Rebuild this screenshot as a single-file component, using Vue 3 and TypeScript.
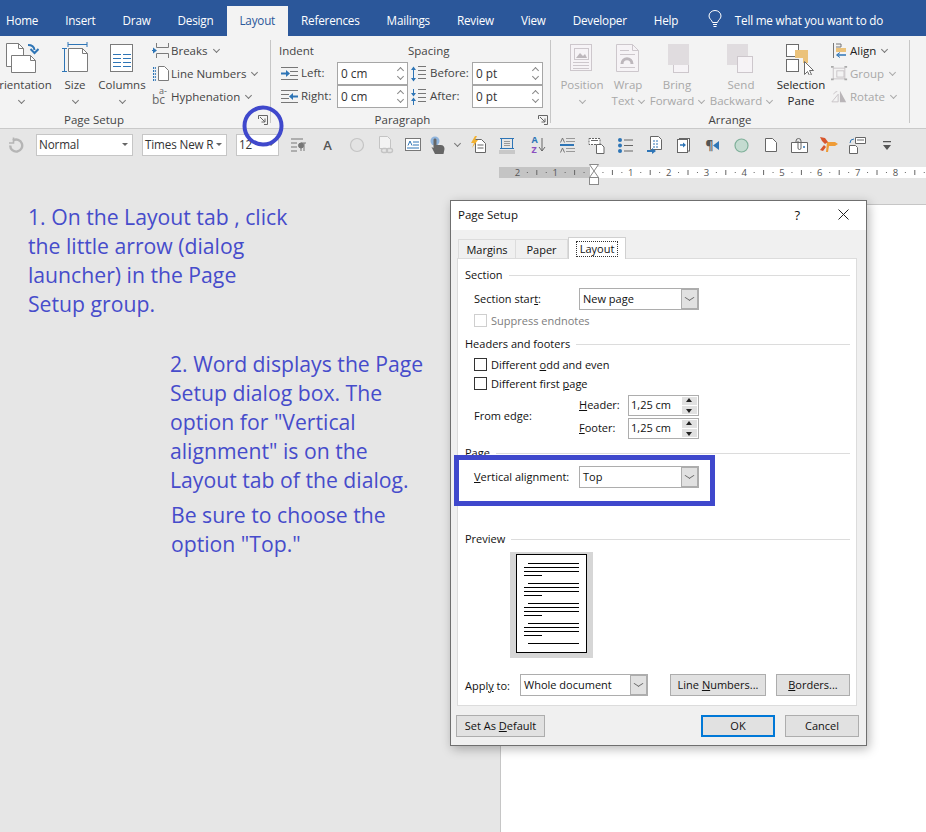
<script setup lang="ts">
const tabs: string[] = ['Home', 'Insert', 'Draw', 'Design', 'Layout', 'References', 'Mailings', 'Review', 'View', 'Developer', 'Help']
const cm = 37.8
const zero = 94
const rulerNums = [
  { t: '2', x: zero - 2 * cm }, { t: '1', x: zero - cm },
  ...[1, 2, 3, 4, 5, 6, 7, 8].map((n) => ({ t: String(n), x: zero + n * cm }))
]
const ticks: { x: number; big: boolean }[] = []
for (let i = -2; i < 9; i++) {
  ticks.push({ x: zero + (i + 0.25) * cm, big: false }, { x: zero + (i + 0.5) * cm, big: true }, { x: zero + (i + 0.75) * cm, big: false })
}
const previewLines: { x: number; w: number; y: number }[] = []
for (let g = 0; g < 4; g++) {
  const y0 = 8 + g * 20
  previewLines.push({ x: 11, w: 51, y: y0 }, { x: 7, w: 55, y: y0 + 4 }, { x: 7, w: 55, y: y0 + 8 }, { x: 7, w: 18, y: y0 + 12 })
}
previewLines.push({ x: 11, w: 51, y: 88 })
</script>

<template>
  <div class="app">
    <div class="tabbar">
      <span v-for="t in tabs" :key="t" class="tab" :class="{ active: t === 'Layout' }">{{ t }}</span>
      <svg class="bulb" width="14" height="18" viewBox="0 0 14 18" fill="none" stroke="#fff" stroke-width="1"><path d="M4.500 12.500C4 10 1 9 1 6a6 5.500 0 0 1 12 0c0 3-3 4-3.500 6.500z" /><path d="M5 14.500h4M5.500 16.500h3" /></svg>
      <span class="tell">Tell me what you want to do</span>
    </div>

    <div class="ribbon">
      <!-- Page Setup -->
      <section class="group g-page">
        <div class="g-body">
          <div class="big w-ori">
            <svg width="36" height="34" viewBox="0 0 36 34" fill="#fff" stroke="#7b7b7b" stroke-width="1"><path d="M3.500 2.500h12l5 5v18h-17z" /><path d="M8.500 14.500h19l5 5v12h-24z" /><path d="M27.500 14.500v5h5M15.500 2.500v5h5" fill="none" /><path d="M25 4c4 0 6 1 6.500 5" fill="none" stroke="#2e75b6" stroke-width="2" /><path d="M27.500 8l4 4 4-4" fill="none" stroke="#2e75b6" stroke-width="2" /></svg>
            <span>Orientation</span><i class="chev" />
          </div>
          <div class="big w-size">
            <svg width="26" height="34" viewBox="0 0 26 34" fill="#fff" stroke="#7b7b7b"><path d="M6.500 7.500h14l5 5v18h-19z" /><path d="M20.500 7.500v5h5" fill="none" /><path d="M6 3.500h19M6 1v5M25 1v5M2.500 8v23M0 7.500h5M0 30.500h5" fill="none" stroke="#2e75b6" /></svg>
            <span>Size</span><i class="chev" />
          </div>
          <div class="big w-col">
            <svg width="24" height="34" viewBox="0 0 24 34" fill="#fff" stroke="#7b7b7b"><rect x=".5" y="3.500" width="22" height="27" /><path d="M3 13.500h8M13 13.500h8M3 17.500h8M13 17.500h8M3 21.500h8M13 21.500h8M3 25.500h8M13 25.500h8" stroke="#2e75b6" /></svg>
            <span>Columns</span><i class="chev" />
          </div>
          <div class="small-col">
            <div class="small">
              <svg width="17" height="17" viewBox="0 0 17 17" fill="none" stroke="#7b7b7b"><path d="M4.500 1v4.500h12V1M4.500 16v-4.500h12V16" /><path d="M0 8.500h1" stroke="#2e75b6" /><path d="M1 5.500l4 3-4 3z" fill="#2e75b6" stroke="none" /></svg>
              <span>Breaks</span><i class="chev" />
            </div>
            <div class="small">
              <svg width="17" height="17" viewBox="0 0 17 17" fill="#fff" stroke="#7b7b7b"><path d="M6.500 1.500h6l4 4v10h-10z" /><path d="M1 3h3M1 6h3M1 9h3M1 12h3M1 15h3" stroke="#2e75b6" stroke-width="2" stroke-dasharray="1 .8" /></svg>
              <span>Line Numbers</span><i class="chev" />
            </div>
            <div class="small">
              <svg width="17" height="19" viewBox="0 0 17 19"><text x="7" y="7" class="hy" fill="#666">a-</text><text x="0" y="17" class="hy2" fill="#666">bc</text></svg>
              <span>Hyphenation</span><i class="chev" />
            </div>
          </div>
        </div>
        <div class="g-label l-page">Page Setup<svg class="launch" width="10" height="10" viewBox="0 0 10 10" fill="none" stroke="#666"><path d="M.5 4V.5h9V9.500H6" /><path d="M2 2l5 5M7 3.500V7H3.500" /></svg></div>
      </section>
      <div class="sep" />

      <!-- Paragraph -->
      <section class="group g-para">
        <div class="g-body para-body">
          <div class="para-col indent">
            <div class="para-head">Indent</div>
            <div class="para-row">
              <svg width="17" height="14" viewBox="0 0 17 14" fill="none" stroke="#777"><path d="M0 .500h17M9 4.500h8M9 8.500h8M0 12.500h17" /><path d="M0 6.500h5" stroke="#2e75b6" stroke-width="2" /><path d="M5 3l4 3.500L5 10z" fill="#2e75b6" stroke="none" /></svg>
              <span class="para-lab">Left:</span>
              <span class="spin">0 cm<i class="sp"><i class="up" /><i class="dn" /></i></span>
            </div>
            <div class="para-row">
              <svg width="17" height="14" viewBox="0 0 17 14" fill="none" stroke="#777"><path d="M0 .500h17M0 4.500h8M0 8.500h8M0 12.500h17" /><path d="M12 6.500h5" stroke="#2e75b6" stroke-width="2" /><path d="M12 3L8 6.500l4 3.500z" fill="#2e75b6" stroke="none" /></svg>
              <span class="para-lab">Right:</span>
              <span class="spin">0 cm<i class="sp"><i class="up" /><i class="dn" /></i></span>
            </div>
          </div>
          <div class="para-col spacing">
            <div class="para-head">Spacing</div>
            <div class="para-row">
              <svg width="17" height="16" viewBox="0 0 17 16" fill="none" stroke="#777"><path d="M8 .500h8M8 4.500h8M8 8.500h8M8 12.500h8" /><path d="M3.500 1v14" stroke="#2e75b6" /><path d="M1 4l2.500-3.500L6 4zM1 12l2.500 3.500L6 12z" fill="#2e75b6" stroke="none" /></svg>
              <span class="para-lab sl">Before:</span>
              <span class="spin sw">0 pt<i class="sp"><i class="up" /><i class="dn" /></i></span>
            </div>
            <div class="para-row">
              <svg width="17" height="16" viewBox="0 0 17 16" fill="none" stroke="#777"><path d="M8 .500h8M8 4.500h8M8 8.500h8M8 12.500h8" /><path d="M3.500 0v6M3.500 10v6" stroke="#2e75b6" /><path d="M1 4l2.500 3.500L6 4zM1 12l2.500-3.500L6 12z" fill="#2e75b6" stroke="none" /></svg>
              <span class="para-lab sl">After:</span>
              <span class="spin sw">0 pt<i class="sp"><i class="up" /><i class="dn" /></i></span>
            </div>
          </div>
        </div>
        <div class="g-label l-para">Paragraph<svg class="launch" width="10" height="10" viewBox="0 0 10 10" fill="none" stroke="#666"><path d="M.5 4V.5h9V9.500H6" /><path d="M2 2l5 5M7 3.500V7H3.500" /></svg></div>
      </section>
      <div class="sep" />

      <!-- Arrange -->
      <section class="group g-arr">
        <div class="g-body">
          <div class="big off w-pos">
            <svg width="24" height="34" viewBox="0 0 24 34" fill="#f6f3f6" stroke="#cdc7cc"><rect x=".5" y="3.500" width="21" height="26" /><rect x="4.500" y="7.500" width="14" height="11" /><path d="M6 17l4-5 3 3 2-2 2 4z" fill="#bdb7bc" stroke="none" /><path d="M3 21.500h16M3 24.500h16M3 27.500h16" fill="none" /></svg>
            <span>Position</span><i class="chev" />
          </div>
          <div class="big off w-wrap">
            <svg width="24" height="34" viewBox="0 0 24 34" fill="#f6f3f6" stroke="#cdc7cc"><path d="M.5 3.500h16l6 6v21H.5z" /><path d="M16.500 3.500v6h6M4 9.500h9M4 13.500h15M4 26.500h15" fill="none" /><path d="M6 23c0-7 10-7 10 0" fill="none" stroke="#bdb7bc" stroke-width="3" /></svg>
            <span>Wrap<br />Text <i class="chev inl" /></span>
          </div>
          <div class="big off w-bring">
            <svg width="28" height="34" viewBox="0 0 28 34" fill="#f6f3f6" stroke="#cdc7cc"><rect x="10.500" y="15.500" width="15" height="16" /><rect x="5" y="3" width="21" height="21" fill="#e0dcdf" stroke="none" /></svg>
            <span>Bring<br />Forward <i class="chev inl" /></span>
          </div>
          <div class="big off w-send">
            <svg width="28" height="34" viewBox="0 0 28 34" fill="#f6f3f6" stroke="#cdc7cc"><rect x="0" y="3" width="21" height="21" fill="#e0dcdf" stroke="none" /><rect x="10.500" y="15.500" width="15" height="16" /></svg>
            <span>Send<br />Backward <i class="chev inl" /></span>
          </div>
          <div class="big w-sel">
            <svg width="30" height="34" viewBox="0 0 30 34" fill="#fff" stroke="#6b6b6b"><rect x=".5" y="3.500" width="12" height="12" /><rect x=".5" y="18.500" width="12" height="12" /><path d="M9 9h13v13h-5v-5H9z" fill="#ebc27a" stroke="none" /><path d="M18.500 20.500v13l3-3 2 4 2-1-2-4h4z" /></svg>
            <span>Selection<br />Pane</span>
          </div>
          <div class="small-col arr-col">
            <div class="small dark">
              <svg width="17" height="17" viewBox="-2 0 17 17" fill="none" stroke="#777"><path d="M.5 1v15" /><path d="M3 2h5v3H3" /><rect x="3" y="6" width="10" height="4" fill="#ebc27a" stroke="none" /><path d="M4 13h9" stroke="#2e75b6" stroke-width="1.500" /><path d="M7 10.500L3.500 13 7 15.500" stroke="#2e75b6" /></svg>
              <span>Align</span><i class="chev" />
            </div>
            <div class="small off">
              <svg width="17" height="17" viewBox="0 0 19 17" fill="none" stroke="#c6c2c5"><rect x="2.500" y="2.500" width="13" height="12" /><rect x="6.500" y="5.500" width="8" height="7" /><path d="M0 1h3M15 1h3M0 15h3M15 15h3" stroke="#aaa" stroke-width="2" /></svg>
              <span>Group</span><i class="chev" />
            </div>
            <div class="small off">
              <svg width="17" height="17" viewBox="0 0 19 17" fill="none" stroke="#c6c2c5"><path d="M1 14.500L8 6v8.500z" /><path d="M10 2l7 13h-7z" fill="#b9b5b8" stroke="none" /><path d="M3 6c1-2 2-3 4-3" /></svg>
              <span>Rotate</span><i class="chev" />
            </div>
          </div>
        </div>
        <div class="g-label">Arrange</div>
      </section>
      <div class="sep" />
    </div>

    <div class="qat">
      <svg class="undo" width="16" height="16" viewBox="0 0 16 16" fill="none" stroke="#b5b5b5" stroke-width="2.400"><path d="M5 3.500a6 6 0 1 1-2.800 5" /><path d="M5.500 .5v5.500H1" stroke-width="1.600" /></svg>
      <span class="combo c-style">Normal<i class="tri" /></span>
      <span class="combo c-font">Times New R<i class="tri" /></span>
      <span class="combo c-size">12<i class="tri" /></span>
      <div class="qi-row">
        <span class="qi"><svg width="17" height="14" viewBox="0 0 17 14" fill="none" stroke="#777"><path d="M1 1h12M1 5h6M1 9h6M1 13h6" /><path d="M11 13V5h5M14 13V5" /><circle cx="11" cy="7.500" r="2.500" fill="#777" /></svg></span>
        <span class="qi glyph">A</span>
        <span class="qi"><svg width="16" height="16" viewBox="0 0 16 16"><circle cx="8" cy="8" r="6.500" fill="#e3e3e3" stroke="#c4c4c4" stroke-width="1.200" /></svg></span>
        <span class="qi"><svg width="16" height="18" viewBox="0 0 16 18" fill="#f3f3f3" stroke="#c4c4c4"><path d="M1.500 .5h8l3 3v9h-11z" /><rect x="3.500" y="12.500" width="6" height="4" rx="2" fill="none" stroke-width="1.400" /><rect x="8.500" y="12.500" width="6" height="4" rx="2" fill="none" stroke-width="1.400" /></svg></span>
        <span class="qi q-n"><svg width="16" height="14" viewBox="0 0 16 14" fill="#fff" stroke="#777"><rect x=".5" y=".5" width="15" height="12" /><path d="M8 4h6M8 7h6M2 10h12" stroke="#2e75b6" /><path d="M3 7.500L5 3l2 4.500" stroke="#2e75b6" fill="none" /></svg></span>
        <span class="qi q-h"><svg width="16" height="19" viewBox="0 0 16 19"><circle cx="5" cy="5" r="4.500" fill="#8fb4dc" /><path d="M3.500 4c0-2 3-2 3 0v5h4c3 0 4 2 4 4l-1 5H5L1.500 11l2 1z" fill="#666" /></svg></span>
        <span class="qi q-c"><i class="chev" /></span>
        <span class="qi"><svg width="15" height="18" viewBox="0 0 15 18" fill="#fff" stroke="#666"><path d="M4.500 3.500h6l4 4v9h-10z" /><path d="M6.500 9h6M6.500 12h6" fill="none" /><path d="M4 0L0 7h3l-2 5 6-8H4l2-4z" fill="#f2b233" stroke="none" /></svg></span>
        <span class="qi"><svg width="17" height="17" viewBox="0 0 17 17" fill="none" stroke="#888"><rect x="2.500" y="1.500" width="11" height="10" stroke="#2e75b6" /><path d="M5 4.500h6M5 6.500h6M5 8.500h6" stroke="#999" /><path d="M1 1.500h3M12 1.500h3M1 11.500h3M12 11.500h3" stroke="#2e75b6" /><path d="M0 14h16M0 16h16" stroke="#aaa" /></svg></span>
        <span class="qi q-az"><span class="az"><b class="a1">A</b><b class="a2">Z</b></span><svg width="8" height="16" viewBox="0 0 8 16" fill="none" stroke="#666"><path d="M4 1v13M1 10l3 4 3-4" /></svg></span>
        <span class="qi"><svg width="16" height="17" viewBox="0 0 16 17" fill="none" stroke="#999"><path d="M0 8h14" stroke="#2e75b6" stroke-width="2" /><path d="M6 1.500h9M6 4.500h9M6 11.500h9M6 14.500h9" /><path d="M.5 5.500L2.500 1l2 4.500M.5 15.500l2-4.500 2 4.500" stroke="#777" /></svg></span>
        <span class="qi"><svg width="17" height="17" viewBox="0 0 17 17" fill="#fff" stroke="#666"><path d="M1 1.500h11v6H1z" stroke-dasharray="2 1" /><path d="M8.500 7.500h5l2.500 2.500v6.500H8.500z" /><path d="M3 3.500h7" /></svg></span>
        <span class="qi"><svg width="15" height="15" viewBox="0 0 15 15" fill="#2e75b6"><circle cx="2" cy="2" r="2" /><circle cx="2" cy="7.500" r="2" /><circle cx="2" cy="13" r="2" /><path d="M6 2h9M6 7.500h9M6 13h9" stroke="#666" /></svg></span>
        <span class="qi"><svg width="15" height="18" viewBox="0 0 15 18" fill="#fff" stroke="#666"><path d="M3.500 .5h8l3 3v10h-11z" /><path d="M6 5h6M6 8h6M6 11h6" stroke="#2e75b6" stroke-dasharray="2 1" /><path d="M0 15h6" stroke="#2e75b6" stroke-width="2" /><path d="M5 12l4 3-4 3z" fill="#2e75b6" stroke="none" /></svg></span>
        <span class="qi"><svg width="13" height="15" viewBox="0 0 13 15" fill="#fff" stroke="#666"><rect x="2.500" y=".5" width="10" height="12.500" /><rect x=".5" y="1.500" width="10" height="13" /><path d="M3 7h5" stroke="#2e75b6" stroke-width="1.500" /><path d="M6 4.500l3 2.500-3 2.500z" fill="#2e75b6" stroke="none" /></svg></span>
        <span class="qi pil">¶<svg width="6" height="9" viewBox="0 0 6 9" fill="#2e75b6"><path d="M6 0v9L0 4.500z" /></svg></span>
        <span class="qi"><svg width="15" height="15" viewBox="0 0 15 15"><circle cx="7.500" cy="7.500" r="6.500" fill="#c4dbd0" stroke="#7fb09a" stroke-width="1.200" /></svg></span>
        <span class="qi"><svg width="12" height="14" viewBox="0 0 12 14" fill="#fff" stroke="#666"><path d="M.5 .5h7l4 4v9H.5z" /></svg></span>
        <span class="qi"><svg width="17" height="15" viewBox="0 0 17 15" fill="#fff" stroke="#666"><path d="M.5 4.500h16v10H.5z" /><path d="M5 5V3a2.500 2.500 0 0 1 5 0v7a1.500 1.500 0 0 1-3 0V3" fill="none" /><circle cx="13" cy="9" r="1" fill="#2e75b6" stroke="none" /></svg></span>
        <span class="qi"><svg width="18" height="16" viewBox="0 0 18 16"><path d="M7 5h8l3 2-3 2H9l-1 6H6z" fill="#ef9c37" /><path d="M0 0l5 1 3 4-3 2-3-3zM0 13l4-5 2 2-3 4z" fill="#d8562c" /></svg></span>
        <span class="qi"><svg width="17" height="17" viewBox="0 0 17 17" fill="#fff" stroke="#666"><path d="M6.500 .5h10v6h-10z" /><path d="M8 3h7" /><path d="M.5 8.500h6l2 2v6h-8z" /><path d="M1 6a4 4 0 0 1 4-4" fill="none" stroke="#2e75b6" /></svg></span>
        <span class="qi"><svg width="8" height="9" viewBox="0 0 8 9" fill="#555"><path d="M0 0h8v1.200H0zM0 4h8L4 9z" /></svg></span>
      </div>
    </div>

    <div class="ruler">
      <svg width="427" height="11" viewBox="0 0 427 11">
        <rect width="91" height="11" fill="#c4c4c4" />
        <rect x="91" width="336" height="11" fill="#fff" />
        <template v-for="(k, i) in ticks" :key="i">
          <rect :x="k.x" :y="k.big ? 3 : 5" width="1" :height="k.big ? 5 : 1" fill="#666" />
        </template>
        <text v-for="n in rulerNums" :key="n.x" :x="n.x" y="9" class="rnum" text-anchor="middle">{{ n.t }}</text>
      </svg>
      <svg class="marker" width="10" height="22" viewBox="0 0 10 22" fill="#fff" stroke="#8a8a8a"><path d="M.5 .5h9L5 7z" /><path d="M5 7l4.500 6.500h-9z" /><rect x=".5" y="13.500" width="9" height="7" /></svg>
    </div>

    <div class="workspace">
      <div class="docpage" />
    </div>

    <!-- Annotations -->
    <svg class="circle" width="42" height="42" viewBox="0 0 42 42" fill="none"><circle cx="21" cy="21" r="18.500" stroke="#3f48cc" stroke-width="4" /></svg>

    <p class="note n1">1. On the Layout tab , click<br />the little arrow (dialog<br />launcher) in the Page<br />Setup group.</p>
    <div class="note n2">
      <p>2. Word displays the Page<br />Setup dialog box. The<br />option for "Vertical<br />alignment" is on the<br />Layout tab of the dialog.</p>
      <p class="sure">Be sure to choose the<br />option "Top."</p>
    </div>

    <!-- Dialog -->
    <div class="dialog">
      <div class="d-title">
        <span class="d-name">Page Setup</span>
        <span class="d-help">?</span>
        <svg class="d-x" width="11" height="11" viewBox="0 0 11 11" stroke="#222" stroke-width="1"><path d="M.5 .5l10 10M10.500 .5l-10 10" /></svg>
      </div>
      <div class="d-tabs">
        <span class="d-tab t-m">Margins</span>
        <span class="d-tab t-p">Paper</span>
        <span class="d-tab t-l"><span class="focus">Layout</span></span>
      </div>
      <div class="panel">
        <div class="legend">Section</div>
        <div class="frow r-sec"><span class="flab"><span>Section star<u>t</u>:</span></span><span class="sel s-120">New page<i class="sel-btn"><i class="v" /></i></span></div>
        <div class="check dis r-sup"><i class="box" />Suppress endnotes</div>
        <div class="legend r-hf">Headers and footers</div>
        <div class="check r-odd"><i class="box" /><span>Different <u>o</u>dd and even</span></div>
        <div class="check r-first"><i class="box" /><span>Different first <u>p</u>age</span></div>
        <div class="edge">
          <span class="flab from">From edge:</span>
          <div class="edge-fields">
            <div class="efield"><span class="elab"><u>H</u>eader:</span><span class="num">1,25 cm<i class="nsp"><i class="nup" /><i class="ndn" /></i></span></div>
            <div class="efield"><span class="elab"><u>F</u>ooter:</span><span class="num">1,25 cm<i class="nsp"><i class="nup" /><i class="ndn" /></i></span></div>
          </div>
        </div>
        <div class="legend r-page">Page</div>
        <div class="frow r-val"><span class="flab"><span><u>V</u>ertical alignment:</span></span><span class="sel s-120">Top<i class="sel-btn"><i class="v" /></i></span></div>
        <div class="legend r-prev">Preview</div>
        <div class="prev-wrap">
          <div class="prev-page">
            <i v-for="(l, i) in previewLines" :key="i" class="pl" :style="{ left: l.x + 'px', width: l.w + 'px', top: l.y + 'px' }" />
          </div>
        </div>
        <div class="apply">
          <span class="a-lab">Appl<u>y</u> to:</span>
          <span class="sel s-doc">Whole document<i class="sel-btn"><i class="v" /></i></span>
          <button class="btn b-line" type="button">Line <u>N</u>umbers...</button>
          <button class="btn b-bord" type="button"><u>B</u>orders...</button>
        </div>
      </div>
      <div class="d-foot">
        <button class="btn b-def" type="button">Set As <u>D</u>efault</button>
        <button class="btn b-ok" type="button">OK</button>
        <button class="btn b-can" type="button">Cancel</button>
      </div>
    </div>

    <div class="hl" />
  </div>
</template>

<style>
html, body { margin: 0; padding: 0; background: #e6e6e6; }
</style>

<style scoped>
.app {
  position: relative; width: 926px; height: 832px; overflow: hidden;
  display: flex; flex-direction: column;
  background: #e6e6e6; color: #444;
  font-family: "Open Sans", "Noto Sans", sans-serif; font-size: 11.5px;
}
.tabbar { height: 36px; background: #2b579a; display: flex; align-items: flex-end; flex: none; }
.tab { color: #fff; font-size: 11.7px; height: 30px; line-height: 28px; padding: 0 13.5px; letter-spacing: -.2px; }
.tab:first-child { padding-left: 6px; }
.tab.active { background: #f3f3f3; color: #2b579a; padding: 0 12.5px; }
.bulb { margin: 0 12px 8px 16px; }
.tell { color: #fff; font-size: 11.7px; height: 30px; line-height: 28px; letter-spacing: -.2px; margin-left: 1px; }

.ribbon { flex: none; height: 92px; background: #f3f3f3; border-bottom: 1px solid #c9c9c9; display: flex; overflow: hidden; }
.group { display: flex; flex-direction: column; height: 92px; flex: none; }
.g-body { display: flex; height: 76px; }
.g-label { position: relative; height: 16px; line-height: 16px; text-align: center; color: #444; }
.l-page { text-align: left; padding-left: 64px; }
.l-para { padding-right: 16px; }
.launch { position: absolute; right: 2px; top: 3px; }
.sep { flex: none; width: 1px; height: 83px; margin-top: 4px; background: #c6c6c6; }
.g-page { width: 270px; }
.g-para { width: 279px; }
.g-arr { width: 358px; }

.big { flex: none; display: flex; flex-direction: column; align-items: center; text-align: center; line-height: 16px; white-space: nowrap; padding-top: 5px; }
.big svg { display: block; flex: none; margin-bottom: 2px; }
.big.off, .small.off { color: #a8a8a8; }
.w-ori { width: 62px; margin-left: -10px; }
.w-size { width: 46px; }
.w-col { width: 48px; }
.w-pos { width: 46px; margin-left: 8px; }
.w-wrap { width: 46px; }
.w-bring { width: 52px; }
.w-send { width: 76px; }
.w-sel { width: 44px; color: #262626; }
.chev { display: block; width: 4px; height: 4px; border-right: 1px solid #777; border-bottom: 1px solid #777; transform: rotate(45deg); margin-top: 5px; }
.chev.inl { display: inline-block; margin: 0 0 3px 2px; vertical-align: middle; }
.off .chev { border-color: #aaa; }

.small-col { display: flex; flex-direction: column; margin-left: 6px; padding-top: 3px; }
.small { height: 23px; display: flex; align-items: center; white-space: nowrap; }
.small svg { flex: none; margin-right: 2px; }
.small .chev { margin: -3px 0 0 6px; }
.small.dark { color: #222; }
.arr-col { margin-left: 8px; }
.hy { font-size: 9px; font-family: "Open Sans", sans-serif; }
.hy2 { font-size: 12px; font-family: "Open Sans", sans-serif; }

.para-body { padding-top: 4px; box-sizing: border-box; padding-left: 8px; }
.para-col { display: flex; flex-direction: column; }
.indent { width: 129px; }
.spacing { width: 135px; }
.para-head { height: 22px; line-height: 22px; }
.para-row { height: 23px; display: flex; align-items: center; line-height: 20px; }
.para-row svg { flex: none; margin: 0 3px 0 2px; }
.para-lab { flex: 1; white-space: nowrap; padding-bottom: 1px; }
.spin { position: relative; box-sizing: border-box; width: 71px; height: 23px; line-height: 20px; padding-left: 3px; border: 1px solid #a6a6a6; background: #fff; color: #333; font-size: 11.8px; }
.sp { position: absolute; right: 2px; top: 2px; bottom: 2px; width: 8px; }
.up, .dn { position: absolute; left: 1px; width: 4px; height: 4px; border-left: 1px solid #888; border-top: 1px solid #888; transform: rotate(45deg); }
.up { top: 3px; }
.dn { bottom: 3px; transform: rotate(225deg); }

.qat { flex: none; height: 38px; display: flex; align-items: center; background: #e6e6e6; box-sizing: border-box; padding: 0 0 6px 8px; }
.undo { flex: none; margin-right: 12px; }
.combo { position: relative; flex: none; box-sizing: border-box; height: 22px; line-height: 18px; background: #fff; border: 1px solid #c6c6c6; padding-left: 2px; color: #333; font-size: 11.7px; letter-spacing: -.15px; white-space: nowrap; overflow: hidden; }
.c-style { width: 97px; margin-right: 9px; }
.c-font { width: 85px; margin-right: 9px; }
.c-size { width: 43px; }
.tri { position: absolute; right: 4px; top: 8px; width: 0; height: 0; border: 3px solid transparent; border-top: 3px solid #666; border-bottom: 0; }
.qi-row { display: flex; align-items: center; margin-left: 5px; }
.qi { flex: none; width: 29px; height: 22px; display: flex; align-items: center; justify-content: center; }
.q-n { width: 26px; }
.q-h { width: 24px; }
.q-c { width: 14px; }
.q-c .chev { margin-top: -3px; }
.q-az { margin-left: 2px; gap: 0; }
.glyph { font-weight: 600; font-size: 13px; color: #555; }
.pil { font-size: 12px; font-weight: 700; color: #555; }
.az { display: flex; flex-direction: column; line-height: 10px; font-size: 9px; }
.a1 { color: #2e75b6; font-weight: 700; }
.a2 { color: #8b4fbf; font-weight: 700; }

.ruler { position: relative; flex: none; height: 11px; margin-left: 499px; }
.ruler > svg:first-child { display: block; }
.marker { position: absolute; left: 90px; top: -3px; overflow: visible; }
.rnum { font-size: 9.500px; fill: #555; font-family: "Open Sans", sans-serif; }

.workspace { flex: 1; padding: 26px 0 0 500px; display: flex; }
.docpage { flex: 1; background: #fff; border-left: 1px solid #c6c6c6; border-top: 1px solid #c6c6c6; }

.circle { position: absolute; left: 242px; top: 105px; }
.note { position: absolute; margin: 0; color: #464ccb; font-size: 21.2px; line-height: 29px; white-space: nowrap; }
.note p { margin: 0; }
.n1 { left: 28px; top: 202px; }
.n2 { left: 170px; top: 349px; }
.sure { margin: 6px 0 0 1px !important; }

.dialog { position: absolute; left: 450px; top: 200px; width: 417px; height: 546px; box-sizing: border-box; background: #f0f0f0; border: 1px solid #6f6f6f; box-shadow: 2px 3px 10px rgba(0,0,0,.28); display: flex; flex-direction: column; color: #111; font-size: 11px; }
.d-title { flex: none; height: 29px; box-sizing: border-box; padding: 0 0 2px 7px; background: #fff; display: flex; align-items: center; }
.d-name { flex: 1; font-size: 11.500px; }
.d-help { margin-right: 38px; font-size: 13px; }
.d-x { margin-right: 17px; }
.d-tabs { flex: none; display: flex; align-items: flex-end; height: 28px; padding-left: 7px; }
.d-tab { box-sizing: border-box; height: 19px; line-height: 20px; text-align: center; background: #f0f0f0; border: 1px solid #dcdcdc; border-bottom: 0; }
.t-m { width: 58px; }
.t-p { width: 52px; border-left: 0; }
.t-l { width: 58px; height: 22px; background: #fff; margin-bottom: -1px; position: relative; z-index: 1; border-color: #d0d0d0; padding-top: 3px; line-height: 15px; }
.focus { display: inline-block; padding: 0 3px; outline: 1px dotted #333; line-height: 14px; }
.panel { flex: none; box-sizing: border-box; height: 448px; margin: 0 9px 0 6px; background: #fff; border: 1px solid #dcdcdc; padding: 8px 6px 0 7px; }
.legend { display: flex; align-items: center; height: 16px; line-height: 16px; white-space: nowrap; }
.legend::after { content: ""; flex: 1; height: 1px; background: #dcdcdc; margin-left: 6px; }
.frow { display: flex; align-items: center; padding-left: 9px; }
.flab { width: 105px; flex: none; white-space: nowrap; padding-bottom: 2px; }
.sel { position: relative; box-sizing: border-box; height: 22px; line-height: 20px; border: 1px solid #adadad; padding-left: 3px; background: #fff; flex: none; }
.s-120 { width: 120px; }
.s-doc { width: 128px; }
.sel-btn { position: absolute; right: -1px; top: -1px; bottom: -1px; width: 18px; box-sizing: border-box; background: #e1e1e1; border: 2px solid #adadad; border-left: 1px solid #adadad; }
.v { position: absolute; left: 4px; top: 4px; width: 6px; height: 6px; border-right: 1px solid #666; border-bottom: 1px solid #666; transform: scaleY(.65) rotate(45deg); }
.r-sec { margin-top: 5px; }
.check { display: flex; align-items: center; box-sizing: border-box; height: 18px; padding: 0 0 1px 9px; white-space: nowrap; }
.box { box-sizing: border-box; width: 13px; height: 13px; border: 1px solid #333; background: #fff; margin-right: 4px; flex: none; }
.dis { color: #7d7d7d; }
.dis .box { border-color: #cfcfcf; }
.r-sup { margin-top: 2px; }
.r-hf { margin-top: 6px; }
.r-odd { margin-top: 4px; }
.r-first { margin-top: 1px; }
.edge { display: flex; align-items: center; padding-left: 9px; margin-top: 2px; }
.from { padding-bottom: 4px; }
.edge-fields { display: flex; flex-direction: column; gap: 2px; }
.efield { display: flex; align-items: center; }
.elab { width: 49px; padding-bottom: 2px; }
.num { position: relative; box-sizing: border-box; width: 71px; height: 21px; line-height: 18px; padding-left: 2px; border: 1px solid #adadad; background: #fff; }
.nsp { position: absolute; right: 1px; top: 1px; bottom: 1px; width: 15px; }
.nup, .ndn { position: absolute; left: 0; width: 15px; height: 8px; background: #e1e1e1; }
.nup { top: 0; }
.ndn { bottom: 0; }
.nup::after, .ndn::after { content: ""; position: absolute; left: 4px; border: 3.5px solid transparent; }
.nup::after { top: 1px; border-bottom: 4px solid #222; border-top: 0; }
.ndn::after { bottom: 1px; border-top: 4px solid #222; border-bottom: 0; }
.r-page { margin-top: 6px; }
.r-val { margin-top: 5px; }
.r-prev { margin-top: 43px; }
.prev-wrap { box-sizing: border-box; width: 83px; height: 106px; margin: 5px 0 0 45px; background: #d6d6d6; padding: 2px 0 0 6px; }
.prev-page { position: relative; box-sizing: border-box; width: 71px; height: 99px; background: #fff; border: 1px solid #000; }
.pl { position: absolute; height: 1px; background: #000; }
.apply { display: flex; align-items: center; margin-top: 16px; }
.a-lab { width: 55px; flex: none; white-space: nowrap; }
.btn { box-sizing: border-box; height: 22px; padding: 0 0 2px; background: #e1e1e1; border: 1px solid #adadad; font: inherit; color: #111; }
.b-line { width: 96px; margin-left: 22px; }
.b-bord { width: 74px; margin-left: 10px; }
.d-foot { flex: 1; display: flex; padding: 9px 7px 0 5px; align-items: flex-start; }
.b-def { width: 89px; margin-right: auto; }
.b-ok { width: 74px; border: 2px solid #0078d7; }
.b-can { width: 74px; margin-left: 10px; }

.hl { position: absolute; left: 454px; top: 455px; width: 261px; height: 51px; box-sizing: border-box; border: 5px solid #3f48cc; }
</style>
